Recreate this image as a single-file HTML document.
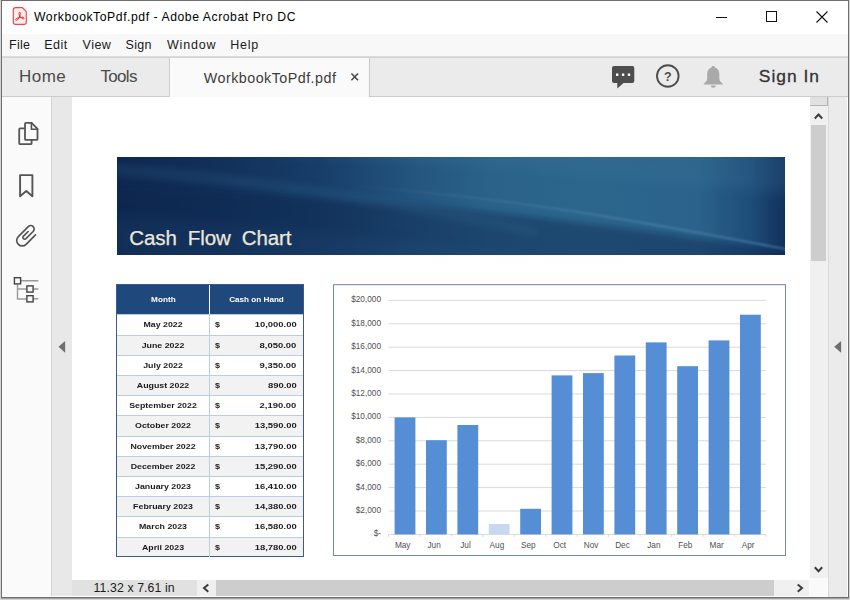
<!DOCTYPE html>
<html>
<head>
<meta charset="utf-8">
<title>WorkbookToPdf.pdf - Adobe Acrobat Pro DC</title>
<style>
*{box-sizing:border-box;margin:0;padding:0}
html,body{width:850px;height:600px;overflow:hidden;background:#fff}
body{position:relative;font-family:"Liberation Sans",sans-serif;color:#000}
.abs{position:absolute}
.t{position:absolute;white-space:nowrap;line-height:1;transform-origin:0 0}
#titlebar{left:2px;top:1px;width:846px;height:33px;background:#fff}
#menubar{left:2px;top:34px;width:846px;height:23px;background:#f8f8f8;border-bottom:1px solid #dcdcdc}
#tabbar{left:2px;top:57px;width:846px;height:40px;background:#ebebeb;border-bottom:1px solid #cdcdcd;border-top:1px solid #d2d2d2}
#tab{left:169px;top:58px;width:201px;height:39px;background:#fafafa;border-left:1px solid #cdcdcd;border-right:1px solid #c8c8c8}
#leftbar{left:2px;top:97px;width:50px;height:499px;background:#fafafa;border-right:1px solid #d4d4d4}
#leftgap{left:52px;top:97px;width:20px;height:499px;background:#e8e8e8}
#rightgap{left:828px;top:97px;width:19px;height:500px;background:#ebebeb;border-left:1px solid #dadada}
#vscroll{left:810px;top:97px;width:18px;height:481px;background:#f0f0f0}
#vthumb{left:811px;top:125px;width:15px;height:136px;background:#cdcdcd}
#hbar{left:72px;top:580px;width:737px;height:16px;background:#f0f0f0}
#status{left:72px;top:580px;width:125px;height:16px;background:#e1e1e1}
#hthumb{left:216px;top:580px;width:558px;height:16px;background:#cdcdcd}
#corner{left:809px;top:578px;width:19px;height:18px;background:#fafafa}
.menu{font-size:12.5px;color:#1a1a1a;top:39.3px}
.big{font-size:17px;color:#4a4a4a;top:68px}
/* table */
#tbl{left:116px;top:284px;width:188px;height:273px;border:1px solid #3c5a8c;background:#fff}
.th{position:absolute;top:0;height:30px;background:#1f487c;color:#fff;font-weight:bold;font-size:7.6px;text-align:center;line-height:30px}
.row{position:absolute;left:0;width:186px;margin-top:-0.2px;height:20.2px;border-top:1px solid #b9cde5;font-size:7.8px;font-weight:bold;color:#1a1a1a;line-height:19px}
.row.alt{background:#f2f2f2}
.row .m{position:absolute;left:0;width:92px;text-align:center;transform:scaleX(1.13)}
.row .d{position:absolute;left:98px;transform:scaleX(1.15);transform-origin:0 50%}
.row .v{position:absolute;right:6.5px;text-align:right;transform:scaleX(1.21);transform-origin:100% 50%}
.row .sep{position:absolute;left:92px;top:-1px;width:1px;height:calc(100% + 2px);background:#b9cde5}
</style>
</head>
<body>
<!-- window frame -->
<div class="abs" style="left:0;top:0;width:850px;height:600px;background:#d4d4d4"></div>
<div class="abs" style="left:1px;top:0;width:848px;height:599px;background:#a2a2a2"></div>
<div class="abs" style="left:1px;top:0;width:848px;height:598px;background:#6e6e6e"></div>
<div class="abs" style="left:2px;top:1px;width:846px;height:596px;background:#fff"></div>

<div class="abs" id="titlebar"></div>
<div class="abs" id="menubar"></div>
<div class="abs" id="tabbar"></div>
<div class="abs" id="tab"></div>
<div class="abs" id="leftbar"></div>
<div class="abs" id="leftgap"></div>
<div class="abs" id="rightgap"></div>
<div class="abs" id="vscroll"></div>
<div class="abs" id="vthumb"></div>
<div class="abs" id="hbar"></div>
<div class="abs" id="status"></div>
<div class="abs" id="hthumb"></div>
<div class="abs" id="corner"></div>

<!-- title -->
<svg class="abs" id="pdficon" style="left:11px;top:5px" width="18" height="22" viewBox="11 5 18 22">
 <path d="M15.500 7.600h6.800l4 4v10.600a2.200 2.200 0 0 1-2.200 2.200h-8.600a2.200 2.200 0 0 1-2.200-2.200v-12.400a2.200 2.200 0 0 1 2.200-2.200z" fill="#fdeeee" stroke="#fa4343" stroke-width="1.150"/>
 <path d="M19.700 12.300c.9 0 .9 1.600.2 3.500-.8 2.200-2.400 4.600-3.600 4.600-.9 0-.9-1.200.3-1.900 1.500-.9 4.500-1.400 6.300-1.100 1.400.2 1.400 1.500.3 1.500-1.700 0-4.300-3.400-4.300-5.700 0-.6.300-.9.800-.9z" fill="none" stroke="#f52222" stroke-width="0.950"/>
</svg>
<div class="t" id="title" style="left:34px;letter-spacing:0.56px;top:11.3px;font-size:12.2px;color:#000">WorkbookToPdf.pdf - Adobe Acrobat Pro DC</div>

<!-- window controls -->
<div class="abs" style="left:716px;top:17px;width:11px;height:1px;background:#111"></div>
<div class="abs" style="left:766px;top:11px;width:11px;height:11px;border:1px solid #111"></div>
<svg class="abs" style="left:816px;top:11px" width="12" height="12" viewBox="0 0 12 12"><path d="M.5.5l11 11M11.500.5l-11 11" stroke="#111" stroke-width="1.100" fill="none"/></svg>

<!-- menu -->
<div class="t menu" id="m1" style="left:9px;letter-spacing:0.3px;">File</div>
<div class="t menu" id="m2" style="left:44.3px;letter-spacing:0.45px;">Edit</div>
<div class="t menu" id="m3" style="left:82.6px;letter-spacing:0.45px;">View</div>
<div class="t menu" id="m4" style="left:125.6px;letter-spacing:0.25px;">Sign</div>
<div class="t menu" id="m5" style="left:167px;letter-spacing:0.82px;">Window</div>
<div class="t menu" id="m6" style="left:230.2px;letter-spacing:0.75px;">Help</div>

<!-- tabs -->
<div class="t big" id="home" style="left:19px;letter-spacing:0.45px;">Home</div>
<div class="t big" id="tools" style="left:100.5px;letter-spacing:-0.7px;">Tools</div>
<div class="t" id="tabname" style="left:203.8px;letter-spacing:0.474px;top:71px;font-size:14.3px;color:#3c3c3c">WorkbookToPdf.pdf</div>
<svg class="abs" style="left:350px;top:72px" width="10" height="10" viewBox="350 72 10 10"><path d="M351.400 73.400l6.600 6.800M358 73.400l-6.600 6.800" stroke="#444" stroke-width="1.500" fill="none"/></svg>
<div class="t" id="signin" style="left:758.8px;letter-spacing:1.0px;top:68px;font-size:17.4px;color:#333;-webkit-text-stroke:0.3px #333">Sign In</div>

<!-- toolbar icons -->
<svg class="abs" id="ichat" style="left:610px;top:64px" width="26" height="26" viewBox="610 64 26 26">
 <path d="M614 66h18.300a2 2 0 0 1 2 2v13a2 2 0 0 1-2 2h-8.800l-6.200 5.500v-5.500h-3.300a2 2 0 0 1-2-2v-13a2 2 0 0 1 2-2z" fill="#4d4d4d"/>
 <rect x="616" y="73.500" width="2.400" height="2.400" fill="#fff"/><rect x="621.900" y="73.500" width="2.400" height="2.400" fill="#fff"/><rect x="627.800" y="73.500" width="2.400" height="2.400" fill="#fff"/>
</svg>
<svg class="abs" id="ihelp" style="left:654px;top:62px" width="28" height="28" viewBox="654 62 28 28">
 <circle cx="667.800" cy="76" r="10.800" fill="none" stroke="#4d4d4d" stroke-width="1.900"/>
 <text x="667.800" y="80.500" font-family="Liberation Sans, sans-serif" font-weight="bold" font-size="12.500" fill="#4d4d4d" text-anchor="middle">?</text>
</svg>
<svg class="abs" id="ibell" style="left:702px;top:64px" width="23" height="25" viewBox="702 64 23 25">
 <path d="M713.300 66c1 0 1.700.7 1.700 1.600 3 .9 4.300 3.400 4.300 6.400v4.500c0 2.200 1.500 3.500 3.400 5.200v.7h-18.900v-.7c1.900-1.700 3.400-3 3.400-5.200v-4.500c0-3 1.300-5.500 4.300-6.400 0-.9.800-1.600 1.800-1.600z" fill="#a9a9a9"/>
 <path d="M710.800 85.500h5a2.500 2.200 0 0 1-5 0z" fill="#a9a9a9"/>
</svg>
<!-- left sidebar icons -->
<svg class="abs" id="ipages" style="left:16px;top:120px" width="26" height="28" viewBox="16 120 26 28" fill="none" stroke="#555" stroke-width="1.800" stroke-linejoin="round" stroke-linecap="round">
 <path d="M24.200 128.400h-4a1 1 0 0 0-1 1v13.800a1 1 0 0 0 1 1h10.400a1 1 0 0 0 1-1v-3"/>
 <path d="M26 122.900h5.600l5.900 6v10a1 1 0 0 1-1 1h-10.500a1 1 0 0 1-1-1v-15a1 1 0 0 1 1-1z" fill="#fafafa"/>
 <path d="M31.400 123.200v6h6" stroke-width="1.600"/>
</svg>
<svg class="abs" id="ibook" style="left:16px;top:172px" width="22" height="28" viewBox="16 172 22 28" fill="none" stroke="#555" stroke-width="1.900" stroke-linejoin="round">
 <path d="M20.100 175.100h12.300v21.200l-6.150-5.200-6.150 5.200z"/>
</svg>
<svg class="abs" id="iclip" style="left:10px;top:218px" width="32" height="34" viewBox="10 218 32 34" fill="none" stroke="#555" stroke-width="1.800" stroke-linecap="round">
 <g transform="translate(25.700 235.400) rotate(45) scale(0.93)">
  <path d="M7.100 -7.800V6.500A5.900 5.900 0 0 1 -4.700 6.500V-8.600A3.700 3.700 0 0 1 2.700 -8.600V2.300A1.900 1.900 0 0 1 -1.100 2.300V-4.800"/>
 </g>
</svg>
<svg class="abs" id="itree" style="left:12px;top:275px" width="28" height="30" viewBox="12 275 28 30" fill="none">
 <path d="M17.500 284.500v14.500h9M17.500 289h9M21 280.800h17.300M33.300 289h5M33.300 298.800h5" stroke="#9a9a9a" stroke-width="1.400"/>
 <rect x="14.400" y="277.700" width="6.200" height="6.200" stroke="#444" stroke-width="1.400" fill="#fafafa"/>
 <rect x="26.900" y="285.900" width="6.200" height="6.200" stroke="#444" stroke-width="1.400" fill="#fafafa"/>
 <rect x="26.900" y="295.700" width="6.200" height="6.200" stroke="#444" stroke-width="1.400" fill="#fafafa"/>
</svg>
<!-- pane arrows -->
<svg class="abs" style="left:56px;top:338px" width="12" height="18" viewBox="56 338 12 18"><path d="M58.500 346.800l6.600-5.900v11.800z" fill="#6e6e6e"/></svg>
<svg class="abs" style="left:832px;top:338px" width="12" height="18" viewBox="832 338 12 18"><path d="M834.200 346.800l6.900-5.900v11.800z" fill="#6e6e6e"/></svg>
<!-- scroll chevrons -->
<svg class="abs" style="left:812px;top:110px" width="14" height="12" viewBox="812 110 14 12"><path d="M814.800 118.500l3.700-4 3.700 4" fill="none" stroke="#3c3c3c" stroke-width="2"/></svg>
<svg class="abs" style="left:812px;top:563px" width="14" height="12" viewBox="812 563 14 12"><path d="M814.800 567.200l3.700 4 3.700-4" fill="none" stroke="#3c3c3c" stroke-width="2"/></svg>
<svg class="abs" style="left:200px;top:582px" width="12" height="14" viewBox="200 582 12 14"><path d="M208.300 584.500l-4.300 3.600 4.300 3.600" fill="none" stroke="#3c3c3c" stroke-width="2"/></svg>
<svg class="abs" style="left:793px;top:582px" width="12" height="14" viewBox="793 582 12 14"><path d="M797.700 584.500l4.300 3.600-4.300 3.600" fill="none" stroke="#3c3c3c" stroke-width="2"/></svg>
<!-- split box -->
<div class="abs" style="left:810px;top:97px;width:18px;height:9px;background:#e1e1e1;border-right:1px solid #b4b4b4;border-bottom:1px solid #b4b4b4"></div>
<!-- status -->
<div class="t" id="dims" style="left:93.5px;letter-spacing:0.1px;top:582.3px;font-size:12.3px;color:#1c1c1c">11.32 x 7.61 in</div>

<!-- banner -->
<svg class="abs" id="banner" style="left:117px;top:157px" width="668" height="98" viewBox="0 0 668 98">
<defs>
<linearGradient id="bg" x1="0" x2="1" y1="0" y2="0">
<stop offset="0" stop-color="#0e2850"/><stop offset="0.15" stop-color="#11305a"/><stop offset="0.3" stop-color="#173d68"/><stop offset="0.45" stop-color="#245680"/><stop offset="0.56" stop-color="#2a628a"/><stop offset="0.7" stop-color="#2c668d"/><stop offset="0.87" stop-color="#2a628b"/><stop offset="0.95" stop-color="#1d4c78"/><stop offset="1" stop-color="#11315b"/>
</linearGradient>
<linearGradient id="sg" gradientUnits="userSpaceOnUse" x1="230" x2="668" y1="0" y2="0">
<stop offset="0" stop-color="#6aa0c0" stop-opacity="0"/><stop offset="0.5" stop-color="#6aa0c0" stop-opacity="0.300"/><stop offset="1" stop-color="#6aa0c0" stop-opacity="0.550"/>
</linearGradient>
<filter id="b6" x="-10%" y="-50%" width="120%" height="200%"><feGaussianBlur stdDeviation="6"/></filter>
<filter id="b3" x="-10%" y="-50%" width="120%" height="200%"><feGaussianBlur stdDeviation="3"/></filter>
<filter id="b1" x="-10%" y="-50%" width="120%" height="200%"><feGaussianBlur stdDeviation="0.800"/></filter>
<clipPath id="bc"><rect width="668" height="98"/></clipPath>
</defs>
<rect width="668" height="98" fill="url(#bg)"/>
<g clip-path="url(#bc)">
 <path d="M-20 -12 C150 -6 400 8 700 40 L700 -12Z" fill="#3d789c" opacity="0.220" filter="url(#b6)"/>
 <path d="M-20 30 C200 34 450 58 700 100 L700 130 L-20 130Z" fill="#0c264d" opacity="0.450" filter="url(#b3)"/>
 <path d="M-20 58 C140 64 330 88 480 112 L-20 112Z" fill="#2d5f8a" opacity="0.140" filter="url(#b6)"/>
 <path d="M-20 6 C100 12 250 34 420 70 L420 80 C250 44 100 24 -20 18Z" fill="#3d789c" opacity="0.160" filter="url(#b3)"/>
 <path d="M230 29 C400 40 540 68 690 96" fill="none" stroke="url(#sg)" stroke-width="1.800" filter="url(#b1)"/>
</g>
</svg>
<div class="t" id="cfc" style="left:129.3px;letter-spacing:-0.12px;top:228px;font-size:20.5px;color:#eee7d8;word-spacing:5.6px;-webkit-text-stroke:0.25px #eee7d8">Cash Flow Chart</div>
<!-- chart -->
<svg class="abs" id="chart" style="left:333px;top:284px" width="454" height="273" viewBox="333 284 454 273" font-family="Liberation Sans, sans-serif">
<rect x="333.5" y="284.7" width="452" height="270.8" fill="#fff" stroke="#6f86ae" stroke-width="1"/>
<line x1="388.5" x2="766" y1="534.4" y2="534.4" stroke="#d9d9d9" stroke-width="1"/>
<text x="381" y="536.4" font-size="8.25" fill="#505050" text-anchor="end">$-</text>
<line x1="388.5" x2="766" y1="511.0" y2="511.0" stroke="#d9d9d9" stroke-width="1"/>
<text x="381" y="513.0" font-size="8.25" fill="#505050" text-anchor="end">$2,000</text>
<line x1="388.5" x2="766" y1="487.6" y2="487.6" stroke="#d9d9d9" stroke-width="1"/>
<text x="381" y="489.6" font-size="8.25" fill="#505050" text-anchor="end">$4,000</text>
<line x1="388.5" x2="766" y1="464.2" y2="464.2" stroke="#d9d9d9" stroke-width="1"/>
<text x="381" y="466.2" font-size="8.25" fill="#505050" text-anchor="end">$6,000</text>
<line x1="388.5" x2="766" y1="440.8" y2="440.8" stroke="#d9d9d9" stroke-width="1"/>
<text x="381" y="442.8" font-size="8.25" fill="#505050" text-anchor="end">$8,000</text>
<line x1="388.5" x2="766" y1="417.4" y2="417.4" stroke="#d9d9d9" stroke-width="1"/>
<text x="381" y="419.4" font-size="8.25" fill="#505050" text-anchor="end">$10,000</text>
<line x1="388.5" x2="766" y1="394.0" y2="394.0" stroke="#d9d9d9" stroke-width="1"/>
<text x="381" y="396.0" font-size="8.25" fill="#505050" text-anchor="end">$12,000</text>
<line x1="388.5" x2="766" y1="370.6" y2="370.6" stroke="#d9d9d9" stroke-width="1"/>
<text x="381" y="372.6" font-size="8.25" fill="#505050" text-anchor="end">$14,000</text>
<line x1="388.5" x2="766" y1="347.2" y2="347.2" stroke="#d9d9d9" stroke-width="1"/>
<text x="381" y="349.2" font-size="8.25" fill="#505050" text-anchor="end">$16,000</text>
<line x1="388.5" x2="766" y1="323.8" y2="323.8" stroke="#d9d9d9" stroke-width="1"/>
<text x="381" y="325.8" font-size="8.25" fill="#505050" text-anchor="end">$18,000</text>
<line x1="388.5" x2="766" y1="300.4" y2="300.4" stroke="#d9d9d9" stroke-width="1"/>
<text x="381" y="302.4" font-size="8.25" fill="#505050" text-anchor="end">$20,000</text>
<rect x="394.6" y="417.4" width="20.8" height="117.0" fill="#558ed5"/>
<text x="402.7" y="547.8" font-size="8.25" fill="#505050" text-anchor="middle">May</text>
<rect x="426.0" y="440.2" width="20.8" height="94.2" fill="#558ed5"/>
<text x="434.1" y="547.8" font-size="8.25" fill="#505050" text-anchor="middle">Jun</text>
<rect x="457.4" y="425.0" width="20.8" height="109.4" fill="#558ed5"/>
<text x="465.5" y="547.8" font-size="8.25" fill="#505050" text-anchor="middle">Jul</text>
<rect x="488.8" y="524.0" width="20.8" height="10.4" fill="#c6d9f1"/>
<text x="496.9" y="547.8" font-size="8.25" fill="#505050" text-anchor="middle">Aug</text>
<rect x="520.2" y="508.8" width="20.8" height="25.6" fill="#558ed5"/>
<text x="528.3" y="547.8" font-size="8.25" fill="#505050" text-anchor="middle">Sep</text>
<rect x="551.6" y="375.4" width="20.8" height="159.0" fill="#558ed5"/>
<text x="559.7" y="547.8" font-size="8.25" fill="#505050" text-anchor="middle">Oct</text>
<rect x="583.0" y="373.1" width="20.8" height="161.3" fill="#558ed5"/>
<text x="591.1" y="547.8" font-size="8.25" fill="#505050" text-anchor="middle">Nov</text>
<rect x="614.4" y="355.5" width="20.8" height="178.9" fill="#558ed5"/>
<text x="622.5" y="547.8" font-size="8.25" fill="#505050" text-anchor="middle">Dec</text>
<rect x="645.8" y="342.4" width="20.8" height="192.0" fill="#558ed5"/>
<text x="653.9" y="547.8" font-size="8.25" fill="#505050" text-anchor="middle">Jan</text>
<rect x="677.2" y="366.2" width="20.8" height="168.2" fill="#558ed5"/>
<text x="685.3" y="547.8" font-size="8.25" fill="#505050" text-anchor="middle">Feb</text>
<rect x="708.6" y="340.4" width="20.8" height="194.0" fill="#558ed5"/>
<text x="716.7" y="547.8" font-size="8.25" fill="#505050" text-anchor="middle">Mar</text>
<rect x="740.0" y="314.7" width="20.8" height="219.7" fill="#558ed5"/>
<text x="748.1" y="547.8" font-size="8.25" fill="#505050" text-anchor="middle">Apr</text>
<line x1="388.5" x2="388.5" y1="534.4" y2="536.9" stroke="#d9d9d9" stroke-width="1"/>
<line x1="420.0" x2="420.0" y1="534.4" y2="536.9" stroke="#d9d9d9" stroke-width="1"/>
<line x1="451.4" x2="451.4" y1="534.4" y2="536.9" stroke="#d9d9d9" stroke-width="1"/>
<line x1="482.9" x2="482.9" y1="534.4" y2="536.9" stroke="#d9d9d9" stroke-width="1"/>
<line x1="514.3" x2="514.3" y1="534.4" y2="536.9" stroke="#d9d9d9" stroke-width="1"/>
<line x1="545.8" x2="545.8" y1="534.4" y2="536.9" stroke="#d9d9d9" stroke-width="1"/>
<line x1="577.3" x2="577.3" y1="534.4" y2="536.9" stroke="#d9d9d9" stroke-width="1"/>
<line x1="608.7" x2="608.7" y1="534.4" y2="536.9" stroke="#d9d9d9" stroke-width="1"/>
<line x1="640.2" x2="640.2" y1="534.4" y2="536.9" stroke="#d9d9d9" stroke-width="1"/>
<line x1="671.6" x2="671.6" y1="534.4" y2="536.9" stroke="#d9d9d9" stroke-width="1"/>
<line x1="703.1" x2="703.1" y1="534.4" y2="536.9" stroke="#d9d9d9" stroke-width="1"/>
<line x1="734.6" x2="734.6" y1="534.4" y2="536.9" stroke="#d9d9d9" stroke-width="1"/>
<line x1="766.0" x2="766.0" y1="534.4" y2="536.9" stroke="#d9d9d9" stroke-width="1"/>
</svg>
<!-- table -->
<div class="abs" id="tbl">
 <div class="th" style="left:0;width:92px"><span style="display:inline-block;transform:scaleX(1.08)">Month</span></div>
 <div class="th" style="left:93px;width:93px"><span style="display:inline-block;transform:scaleX(1.07)">Cash on Hand</span></div>
 <div class="abs" style="left:92px;top:0;width:1px;height:30px;background:#fff"></div>
 <div class="row" style="top:29.600px"><span class="m">May 2022</span><span class="sep"></span><span class="d">$</span><span class="v">10,000.00</span></div>
 <div class="row alt" style="top:49.800px"><span class="m">June 2022</span><span class="sep"></span><span class="d">$</span><span class="v">8,050.00</span></div>
 <div class="row" style="top:70px"><span class="m">July 2022</span><span class="sep"></span><span class="d">$</span><span class="v">9,350.00</span></div>
 <div class="row alt" style="top:90.200px"><span class="m">August 2022</span><span class="sep"></span><span class="d">$</span><span class="v">890.00</span></div>
 <div class="row" style="top:110.400px"><span class="m">September 2022</span><span class="sep"></span><span class="d">$</span><span class="v">2,190.00</span></div>
 <div class="row alt" style="top:130.600px"><span class="m">October 2022</span><span class="sep"></span><span class="d">$</span><span class="v">13,590.00</span></div>
 <div class="row" style="top:150.800px"><span class="m">November 2022</span><span class="sep"></span><span class="d">$</span><span class="v">13,790.00</span></div>
 <div class="row alt" style="top:171px"><span class="m">December 2022</span><span class="sep"></span><span class="d">$</span><span class="v">15,290.00</span></div>
 <div class="row" style="top:191.200px"><span class="m">January 2023</span><span class="sep"></span><span class="d">$</span><span class="v">16,410.00</span></div>
 <div class="row alt" style="top:211.400px"><span class="m">February 2023</span><span class="sep"></span><span class="d">$</span><span class="v">14,380.00</span></div>
 <div class="row" style="top:231.600px"><span class="m">March 2023</span><span class="sep"></span><span class="d">$</span><span class="v">16,580.00</span></div>
 <div class="row alt" style="top:251.800px;height:19.400px"><span class="m">April 2023</span><span class="sep"></span><span class="d">$</span><span class="v">18,780.00</span></div>
</div>
</body>
</html>
